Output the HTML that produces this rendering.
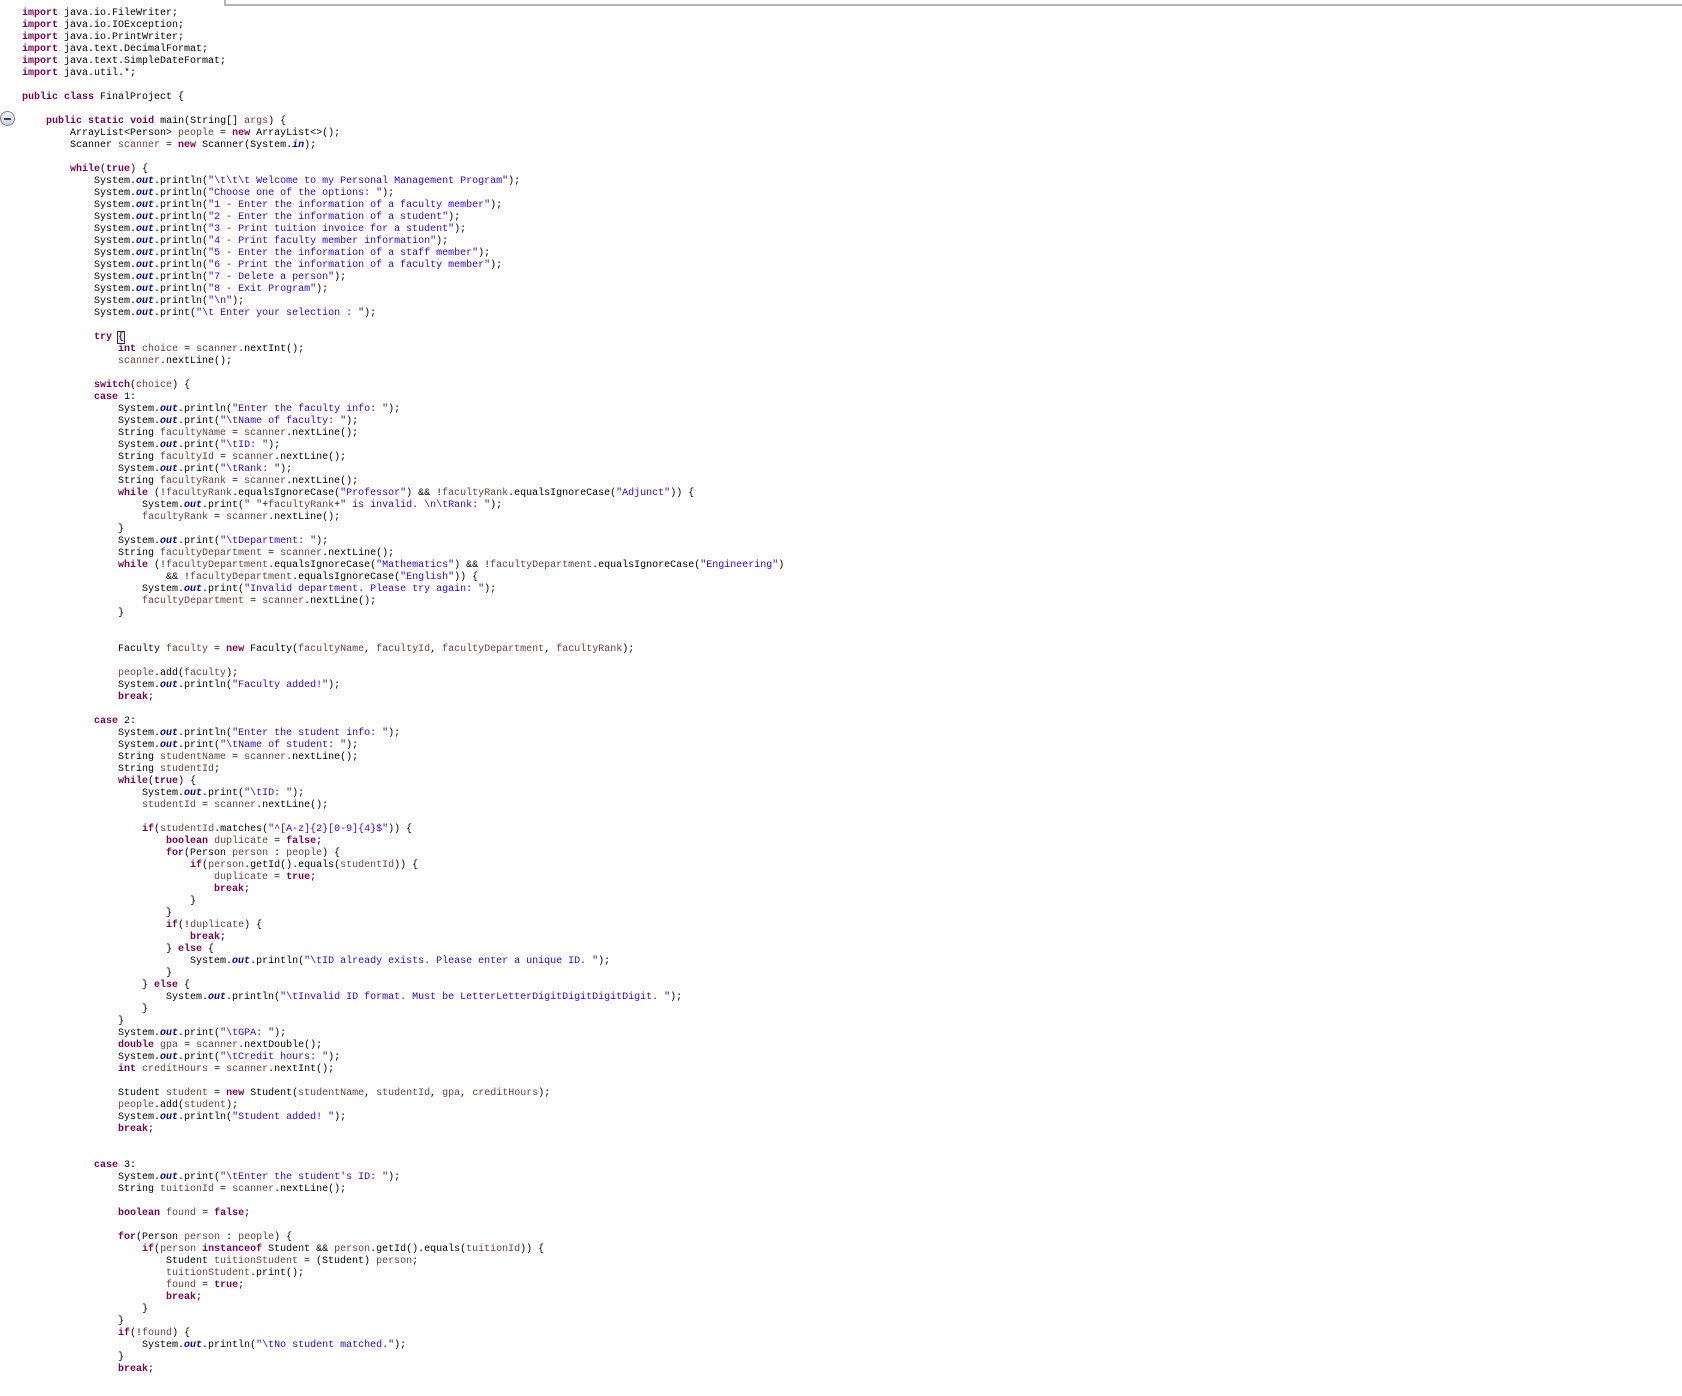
<!DOCTYPE html>
<html><head><meta charset="utf-8">
<style>
html,body{margin:0;padding:0;background:#fff;width:1682px;height:1396px;overflow:hidden;position:relative}
pre{position:absolute;left:22px;top:8px;margin:0;font-family:"Liberation Mono","DejaVu Sans Mono",monospace;font-size:10px;line-height:12px;color:#000;white-space:pre}
.k{color:#7F0055;font-weight:bold}
.s{color:#2A00FF}
.o{color:#0000C0;font-weight:bold;font-style:italic}
.v{color:#6A3E3E}
.box{position:absolute;left:224px;top:0;width:1460px;height:4px;border-left:2px solid #b5b5b5;border-bottom:2px solid #b5b5b5}
.fold{position:absolute;left:0px;top:111px;width:13px;height:13px;border-radius:50%;border:1px solid #7a8599;background:linear-gradient(#f4f6fa,#c9d0dc)}
.fold:after{content:"";position:absolute;left:3px;top:6px;width:7px;height:1.5px;background:#3a4558}
.br{outline:1px solid #4a2040;background:#e8e8e8}
</style></head><body>
<div class="box"></div>
<div class="fold"></div>
<pre><span class="k">import</span> java.io.FileWriter;
<span class="k">import</span> java.io.IOException;
<span class="k">import</span> java.io.PrintWriter;
<span class="k">import</span> java.text.DecimalFormat;
<span class="k">import</span> java.text.SimpleDateFormat;
<span class="k">import</span> java.util.*;

<span class="k">public</span> <span class="k">class</span> FinalProject {

    <span class="k">public</span> <span class="k">static</span> <span class="k">void</span> main(String[] <span class="v">args</span>) {
        ArrayList&lt;Person&gt; <span class="v">people</span> = <span class="k">new</span> ArrayList&lt;&gt;();
        Scanner <span class="v">scanner</span> = <span class="k">new</span> Scanner(System.<span class="o">in</span>);

        <span class="k">while</span>(<span class="k">true</span>) {
            System.<span class="o">out</span>.println(<span class="s">"\t\t\t Welcome to my Personal Management Program"</span>);
            System.<span class="o">out</span>.println(<span class="s">"Choose one of the options: "</span>);
            System.<span class="o">out</span>.println(<span class="s">"1 - Enter the information of a faculty member"</span>);
            System.<span class="o">out</span>.println(<span class="s">"2 - Enter the information of a student"</span>);
            System.<span class="o">out</span>.println(<span class="s">"3 - Print tuition invoice for a student"</span>);
            System.<span class="o">out</span>.println(<span class="s">"4 - Print faculty member information"</span>);
            System.<span class="o">out</span>.println(<span class="s">"5 - Enter the information of a staff member"</span>);
            System.<span class="o">out</span>.println(<span class="s">"6 - Print the information of a faculty member"</span>);
            System.<span class="o">out</span>.println(<span class="s">"7 - Delete a person"</span>);
            System.<span class="o">out</span>.println(<span class="s">"8 - Exit Program"</span>);
            System.<span class="o">out</span>.println(<span class="s">"\n"</span>);
            System.<span class="o">out</span>.print(<span class="s">"\t Enter your selection : "</span>);

            <span class="k">try</span> <span class="br">{</span>
                <span class="k">int</span> <span class="v">choice</span> = <span class="v">scanner</span>.nextInt();
                <span class="v">scanner</span>.nextLine();

            <span class="k">switch</span>(<span class="v">choice</span>) {
            <span class="k">case</span> 1:
                System.<span class="o">out</span>.println(<span class="s">"Enter the faculty info: "</span>);
                System.<span class="o">out</span>.print(<span class="s">"\tName of faculty: "</span>);
                String <span class="v">facultyName</span> = <span class="v">scanner</span>.nextLine();
                System.<span class="o">out</span>.print(<span class="s">"\tID: "</span>);
                String <span class="v">facultyId</span> = <span class="v">scanner</span>.nextLine();
                System.<span class="o">out</span>.print(<span class="s">"\tRank: "</span>);
                String <span class="v">facultyRank</span> = <span class="v">scanner</span>.nextLine();
                <span class="k">while</span> (!<span class="v">facultyRank</span>.equalsIgnoreCase(<span class="s">"Professor"</span>) &amp;&amp; !<span class="v">facultyRank</span>.equalsIgnoreCase(<span class="s">"Adjunct"</span>)) {
                    System.<span class="o">out</span>.print(<span class="s">" "</span>+<span class="v">facultyRank</span>+<span class="s">" is invalid. \n\tRank: "</span>);
                    <span class="v">facultyRank</span> = <span class="v">scanner</span>.nextLine();
                }
                System.<span class="o">out</span>.print(<span class="s">"\tDepartment: "</span>);
                String <span class="v">facultyDepartment</span> = <span class="v">scanner</span>.nextLine();
                <span class="k">while</span> (!<span class="v">facultyDepartment</span>.equalsIgnoreCase(<span class="s">"Mathematics"</span>) &amp;&amp; !<span class="v">facultyDepartment</span>.equalsIgnoreCase(<span class="s">"Engineering"</span>)
                        &amp;&amp; !<span class="v">facultyDepartment</span>.equalsIgnoreCase(<span class="s">"English"</span>)) {
                    System.<span class="o">out</span>.print(<span class="s">"Invalid department. Please try again: "</span>);
                    <span class="v">facultyDepartment</span> = <span class="v">scanner</span>.nextLine();
                }


                Faculty <span class="v">faculty</span> = <span class="k">new</span> Faculty(<span class="v">facultyName</span>, <span class="v">facultyId</span>, <span class="v">facultyDepartment</span>, <span class="v">facultyRank</span>);

                <span class="v">people</span>.add(<span class="v">faculty</span>);
                System.<span class="o">out</span>.println(<span class="s">"Faculty added!"</span>);
                <span class="k">break</span>;

            <span class="k">case</span> 2:
                System.<span class="o">out</span>.println(<span class="s">"Enter the student info: "</span>);
                System.<span class="o">out</span>.print(<span class="s">"\tName of student: "</span>);
                String <span class="v">studentName</span> = <span class="v">scanner</span>.nextLine();
                String <span class="v">studentId</span>;
                <span class="k">while</span>(<span class="k">true</span>) {
                    System.<span class="o">out</span>.print(<span class="s">"\tID: "</span>);
                    <span class="v">studentId</span> = <span class="v">scanner</span>.nextLine();

                    <span class="k">if</span>(<span class="v">studentId</span>.matches(<span class="s">"^[A-z]{2}[0-9]{4}$"</span>)) {
                        <span class="k">boolean</span> <span class="v">duplicate</span> = <span class="k">false</span>;
                        <span class="k">for</span>(Person <span class="v">person</span> : <span class="v">people</span>) {
                            <span class="k">if</span>(<span class="v">person</span>.getId().equals(<span class="v">studentId</span>)) {
                                <span class="v">duplicate</span> = <span class="k">true</span>;
                                <span class="k">break</span>;
                            }
                        }
                        <span class="k">if</span>(!<span class="v">duplicate</span>) {
                            <span class="k">break</span>;
                        } <span class="k">else</span> {
                            System.<span class="o">out</span>.println(<span class="s">"\tID already exists. Please enter a unique ID. "</span>);
                        }
                    } <span class="k">else</span> {
                        System.<span class="o">out</span>.println(<span class="s">"\tInvalid ID format. Must be LetterLetterDigitDigitDigitDigit. "</span>);
                    }
                }
                System.<span class="o">out</span>.print(<span class="s">"\tGPA: "</span>);
                <span class="k">double</span> <span class="v">gpa</span> = <span class="v">scanner</span>.nextDouble();
                System.<span class="o">out</span>.print(<span class="s">"\tCredit hours: "</span>);
                <span class="k">int</span> <span class="v">creditHours</span> = <span class="v">scanner</span>.nextInt();

                Student <span class="v">student</span> = <span class="k">new</span> Student(<span class="v">studentName</span>, <span class="v">studentId</span>, <span class="v">gpa</span>, <span class="v">creditHours</span>);
                <span class="v">people</span>.add(<span class="v">student</span>);
                System.<span class="o">out</span>.println(<span class="s">"Student added! "</span>);
                <span class="k">break</span>;


            <span class="k">case</span> 3:
                System.<span class="o">out</span>.print(<span class="s">"\tEnter the student's ID: "</span>);
                String <span class="v">tuitionId</span> = <span class="v">scanner</span>.nextLine();

                <span class="k">boolean</span> <span class="v">found</span> = <span class="k">false</span>;

                <span class="k">for</span>(Person <span class="v">person</span> : <span class="v">people</span>) {
                    <span class="k">if</span>(<span class="v">person</span> <span class="k">instanceof</span> Student &amp;&amp; <span class="v">person</span>.getId().equals(<span class="v">tuitionId</span>)) {
                        Student <span class="v">tuitionStudent</span> = (Student) <span class="v">person</span>;
                        <span class="v">tuitionStudent</span>.print();
                        <span class="v">found</span> = <span class="k">true</span>;
                        <span class="k">break</span>;
                    }
                }
                <span class="k">if</span>(!<span class="v">found</span>) {
                    System.<span class="o">out</span>.println(<span class="s">"\tNo student matched."</span>);
                }
                <span class="k">break</span>;
</pre>
</body></html>
